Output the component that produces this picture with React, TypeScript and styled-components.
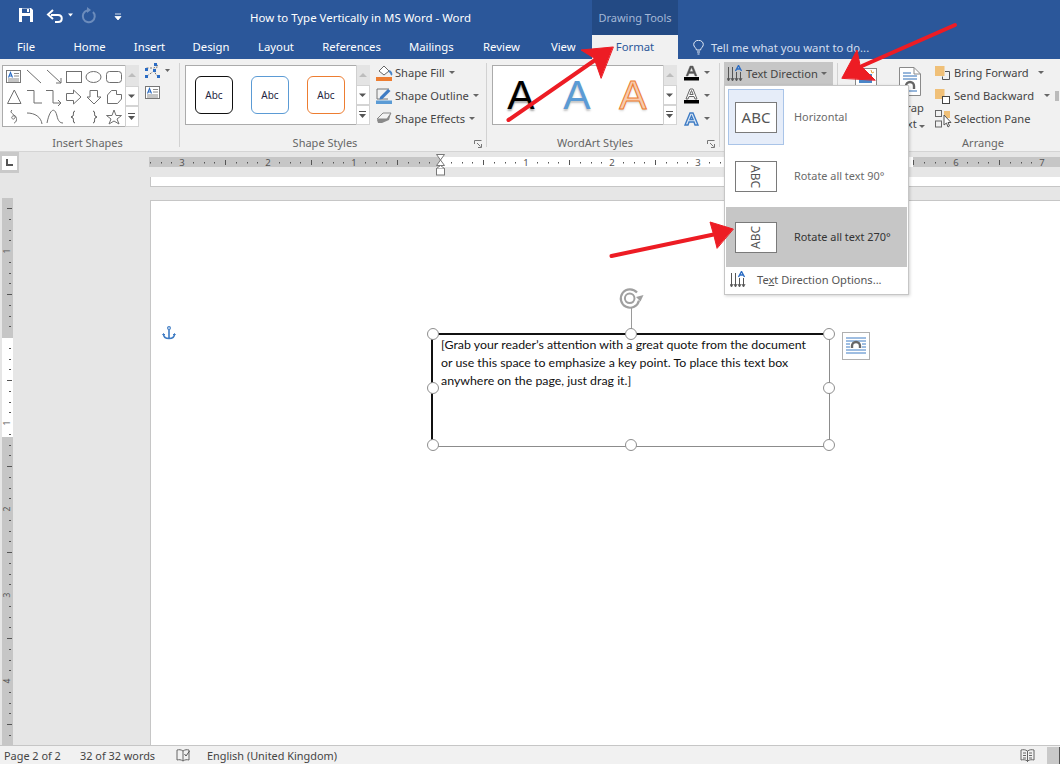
import React from "react";
import styled, { createGlobalStyle } from "styled-components";

const Global = createGlobalStyle`
  html, body { margin: 0; padding: 0; background: #e6e6e6; }
  * { box-sizing: border-box; }
`;

const Frame = styled.div`
  position: relative;
  width: 1060px;
  height: 764px;
  overflow: hidden;
  display: flex;
  flex-direction: column;
  font-family: "Noto Sans", "Open Sans", sans-serif;
  font-size: 11.5px;
  color: #444;
  background: #e6e6e6;
`;

/* ---------- title bar ---------- */
const TitleBar = styled.div`
  height: 35px;
  display: flex;
  background: #2b579a;
  color: #fff;
  flex: none;
`;
const Qat = styled.svg`
  width: 250px;
  height: 35px;
  flex: none;
`;
const DocTitle = styled.div`
  width: 342px;
  line-height: 36px;
  font-size: 11.45px;
  white-space: nowrap;
`;
const ContextLabel = styled.div`
  width: 86px;
  background: #234a84;
  color: #a4b8d6;
  text-align: center;
  line-height: 36px;
  font-size: 11px;
`;

/* ---------- tabs ---------- */
const TabBar = styled.div`
  height: 24px;
  display: flex;
  background: #2b579a;
  flex: none;
`;
const Tab = styled.div<{ $w: number; $active?: boolean }>`
  width: ${(p) => p.$w}px;
  text-align: center;
  line-height: 23px;
  font-size: 11.3px;
  white-space: nowrap;
  color: ${(p) => (p.$active ? "#2b579a" : "#fff")};
  background: ${(p) => (p.$active ? "#f1f1f1" : "transparent")};
`;
const TellMe = styled.div`
  display: flex;
  align-items: center;
  gap: 7px;
  margin-left: 15px;
  color: #d3deee;
  font-size: 11.3px;
  line-height: 23px;
  white-space: nowrap;
`;

/* ---------- ribbon ---------- */
const Ribbon = styled.div`
  height: 93px;
  display: flex;
  background: #f1f1f1;
  border-bottom: 1px solid #d4d4d4;
  flex: none;
`;
const Group = styled.div<{ $w: number; $noRule?: boolean }>`
  position: relative;
  width: ${(p) => p.$w}px;
  flex: none;
  display: flex;
  flex-direction: column;
  padding-top: 3px;
  &::after {
    content: "";
    position: absolute;
    right: 0;
    top: 4px;
    bottom: 4px;
    width: 1px;
    background: ${(p) => (p.$noRule ? "transparent" : "#d2d2d2")};
  }
`;
const GroupBody = styled.div<{ $left: number }>`
  flex: 1;
  display: flex;
  gap: 6px;
  padding-left: ${(p) => p.$left}px;
`;
const GroupLabel = styled.div<{ $shift?: number; $pull?: number }>`
  height: 17px;
  text-align: center;
  line-height: 17px;
  color: #666;
  font-size: 11px;
  padding-left: ${(p) => p.$shift ?? 0}px;
  padding-right: ${(p) => p.$pull ?? 0}px;
`;
const Launcher = styled.svg`
  position: absolute;
  right: 5px;
  bottom: 3px;
  width: 8px;
  height: 8px;
`;
const Gallery = styled.div<{ $w: number; $h: number }>`
  width: ${(p) => p.$w}px;
  height: ${(p) => p.$h}px;
  margin-top: 3px;
  display: flex;
  background: #fff;
  border: 1px solid #ababab;
  flex: none;
`;
const GalleryItems = styled.div`
  flex: 1;
  display: flex;
  align-items: center;
  justify-content: space-around;
  position: relative;
  min-width: 0;
`;
const ScrollCol = styled.div`
  width: 14px;
  flex: none;
  display: flex;
  flex-direction: column;
  border-left: 1px solid #d0d0d0;
  margin: -1px -1px -1px 0;
`;
const ScrollBtn = styled.div<{ $off?: boolean }>`
  flex: 1;
  display: flex;
  align-items: center;
  justify-content: center;
  background: ${(p) => (p.$off ? "#e4e4e4" : "#fff")};
  border: 1px solid ${(p) => (p.$off ? "#e4e4e4" : "#d4d4d4")};
  border-left: 0;
  color: ${(p) => (p.$off ? "#bdbdbd" : "#555")};
`;
const StyleCards = styled.div`
  display: flex;
  gap: 18px;
  padding-left: 9px;
  flex: 1;
  align-items: center;
`;
const StyleCard = styled.div<{ $c: string }>`
  width: 38px;
  height: 38px;
  border: 1.3px solid ${(p) => p.$c};
  border-radius: 6px;
  display: flex;
  align-items: center;
  justify-content: center;
  font-size: 10px;
  color: #1f1f3f;
`;
const ArtRow = styled.div`
  flex: 1;
  display: flex;
  padding-left: 0;
  align-items: center;
`;
const ArtLetter = styled.div<{ $fill: string; $stroke?: string; $blur: string }>`
  width: 56px;
  text-align: center;
  font-family: "Liberation Sans", Arial, sans-serif;
  font-size: 41px;
  line-height: 46px;
  color: ${(p) => p.$fill};
  -webkit-text-stroke: ${(p) => (p.$stroke ? `1px ${p.$stroke}` : "0")};
  text-shadow: 0 2px 2px ${(p) => p.$blur};
`;
const ButtonStack = styled.div<{ $gap?: number }>`
  display: flex;
  flex-direction: column;
  gap: ${(p) => p.$gap ?? 0}px;
  margin-top: ${(p) => (p.$gap ? 1 : -1)}px;
`;
const SmallBtn = styled.div`
  height: 23px;
  display: flex;
  align-items: center;
  gap: 2px;
  white-space: nowrap;
  font-size: 11.15px;
`;
const Caret = styled.span`
  width: 0;
  height: 0;
  margin-left: 2px;
  border-left: 3px solid transparent;
  border-right: 3px solid transparent;
  border-top: 3px solid #666;
  display: inline-block;
`;
const TextDirBtn = styled.div`
  width: 109px;
  height: 23px;
  margin-left: 4px;
  display: flex;
  align-items: center;
  gap: 1px;
  padding-left: 3px;
  background: #c6c6c6;
  white-space: nowrap;
  font-size: 11.15px;
`;
const PositionIcon = styled.svg`
  width: 24px;
  height: 36px;
  margin: 5px 0 0 16px;
  flex: none;
`;
const WrapBtn = styled.div`
  width: 42px;
  flex: none;
  margin-left: 5px;
  display: flex;
  flex-direction: column;
  align-items: center;
  padding-top: 5px;
  font-size: 11.15px;
  line-height: 16px;
  white-space: nowrap;
  svg { margin-bottom: 4px; flex: none; }
`;
const ArrangeStack = styled.div`
  display: flex;
  flex-direction: column;
  margin: -1px 0 0 -2px;
  width: 124px;
  flex: none;
`;
const ArrangeRow = styled.div`
  height: 23px;
  display: flex;
  align-items: center;
  gap: 1px;
  white-space: nowrap;
  font-size: 11.15px;
`;
const Spacer = styled.span<{ $w: number }>`
  width: ${(p) => p.$w}px;
  flex: none;
`;
const TinyBox = styled.span`
  width: 4px;
  height: 10px;
  flex: none;
  margin-left: auto;
  background: #bbb;
`;

/* ---------- ruler row + document ---------- */
const RulerRow = styled.div`
  height: 25px;
  display: flex;
  flex: none;
`;
const CornerBtn = styled.div`
  width: 149px;
  flex: none;
`;
const CornerMark = styled.div`
  width: 19px;
  height: 21px;
  background: #c9c9c9;
  display: flex;
  align-items: center;
  justify-content: center;
`;
const CornerFace = styled.div`
  width: 15px;
  height: 14px;
  background: #fff;
  display: flex;
  align-items: center;
  justify-content: center;
`;
const Workspace = styled.div`
  flex: 1;
  display: flex;
  min-height: 0;
`;
const Rail = styled.div`
  width: 150px;
  flex: none;
  padding: 21px 0 0 2px;
`;
const DocColumn = styled.div`
  flex: 1;
  display: flex;
  flex-direction: column;
  gap: 13px;
`;
const PageTail = styled.div`
  height: 10px;
  flex: none;
  background: #fff;
  border-left: 1px solid #c6c6c6;
  border-bottom: 1px solid #c6c6c6;
`;
const Page = styled.div`
  position: relative;
  flex: 1;
  background: #fff;
  border-left: 1px solid #c6c6c6;
  border-top: 1px solid #c6c6c6;
  padding: 132px 0 0 280px;
`;
const Anchor = styled.svg`
  position: absolute;
  left: 11px;
  top: 125px;
  width: 14px;
  height: 14px;
`;
const TextBox = styled.div`
  position: relative;
  width: 399px;
  height: 114px;
  border-top: 2px solid #111;
  border-left: 2px solid #111;
  border-right: 1px solid #8c8c8c;
  border-bottom: 1px solid #8c8c8c;
  padding: 1px 0 0 8px;
  font-family: Lato, "Noto Sans", sans-serif;
  font-size: 12.37px;
  line-height: 18px;
  color: #111;
  white-space: nowrap;
`;
const Handle = styled.span<{ $x: number; $y: number }>`
  position: absolute;
  left: ${(p) => p.$x}%;
  top: ${(p) => p.$y}%;
  width: 12px;
  height: 12px;
  margin: -7px 0 0 -6px;
  border-radius: 50%;
  border: 1.5px solid #8e8e8e;
  background: #fff;
`;
const RotateStem = styled.span`
  position: absolute;
  left: 50%;
  top: -27px;
  width: 1px;
  height: 26px;
  background: #9a9a9a;
`;
const RotateIcon = styled.svg`
  position: absolute;
  left: 185px;
  top: -47px;
  width: 28px;
  height: 24px;
`;
const LayoutOptions = styled.div`
  position: absolute;
  left: 409px;
  top: -3px;
  width: 28px;
  height: 28px;
  border: 1px solid #b0b0b0;
  background: #fff;
  display: flex;
  align-items: center;
  justify-content: center;
`;

/* ---------- dropdown ---------- */
const Menu = styled.div`
  position: absolute;
  left: 724px;
  top: 85px;
  width: 185px;
  height: 210px;
  background: #fff;
  border: 1px solid #c6c6c6;
  box-shadow: 1px 1px 3px rgba(0, 0, 0, 0.18);
  display: flex;
  flex-direction: column;
  padding: 3px 1px 0;
`;
const MenuItem = styled.div<{ $h: number; $hot?: boolean }>`
  height: ${(p) => p.$h}px;
  flex: none;
  display: flex;
  align-items: center;
  background: ${(p) => (p.$hot ? "#c6c6c6" : "transparent")};
  color: ${(p) => (p.$hot ? "#333" : "#6a6a6a")};
  font-size: 10.9px;
  white-space: nowrap;
`;
const MenuLabel = styled.span`
  margin-top: -2px;
`;
const IconCell = styled.div<{ $on?: boolean }>`
  width: 56px;
  height: 56px;
  margin: 0 10px 0 2px;
  flex: none;
  display: flex;
  align-items: center;
  justify-content: center;
  background: ${(p) => (p.$on ? "#e6edf9" : "transparent")};
  border: 1px solid ${(p) => (p.$on ? "#a9c4e8" : "transparent")};
`;
const AbcBox = styled.div`
  width: 42px;
  height: 31px;
  background: #fff;
  border: 1px solid #7a7a7a;
  display: flex;
  align-items: center;
  justify-content: center;
  overflow: hidden;
`;
const AbcText = styled.span<{ $rot?: number; $size: number }>`
  display: inline-block;
  font-size: ${(p) => p.$size}px;
  color: #555;
  letter-spacing: 0;
  transform: rotate(${(p) => p.$rot ?? 0}deg);
`;
const MenuFoot = styled.div`
  flex: 1;
  display: flex;
  align-items: center;
  gap: 9px;
  padding: 0 0 2px 4px;
  font-size: 11.1px;
  color: #555;
  white-space: nowrap;
`;

/* ---------- status bar ---------- */
const StatusBar = styled.div`
  height: 19px;
  flex: none;
  display: flex;
  align-items: center;
  background: #f1f1f1;
  border-top: 1px solid #c6c6c6;
  font-size: 10.9px;
  color: #444;
  white-space: nowrap;
  padding: 1px 0 0 4px;
`;
const StatusText = styled.span<{ $w: number }>`
  width: ${(p) => p.$w}px;
  flex: none;
`;
const StatusIcon = styled.svg`
  width: 15px;
  height: 15px;
  flex: none;
`;
const StatusRight = styled.div`
  margin-left: auto;
  display: flex;
  align-items: center;
  align-self: stretch;
`;
const ActiveView = styled.div`
  width: 13px;
  align-self: stretch;
  margin-left: 12px;
  background: #c9c9c9;
  border-right: 1px solid #555;
`;
const ArrowLayer = styled.svg`
  position: absolute;
  inset: 0;
  width: 1060px;
  height: 764px;
  pointer-events: none;
`;

/* ---------- drawings ---------- */
const TextBoxGlyph = ({ x = 0, y = 0 }: { x?: number; y?: number }) => (
  <g transform={`translate(${x} ${y})`}>
    <rect x="0.5" y="0.5" width="14" height="12" fill="#fff" stroke="#777" />
    <path d="M2.5 7.5 L4.5 2.5 L6.5 7.5 M3.3 6 H5.7" fill="none" stroke="#2b6cc4" strokeWidth="1.1" />
    <path d="M8 3.5 H13 M8 6 H13 M2 9 H13 M2 11 H13" stroke="#8a8a8a" />
  </g>
);

const ShapesGrid = () => (
  <svg width="122" height="60" viewBox="0 0 122 60" fill="none" stroke="#6f6f6f" strokeWidth="1">
    <TextBoxGlyph x={3} y={4} />
    <path d="M24 4 L38 17" />
    <path d="M44 4 L58 17 M58 12 V17 H53" />
    <rect x="63.5" y="5.5" width="15" height="11" />
    <ellipse cx="90.5" cy="11" rx="7.5" ry="5.5" />
    <rect x="103.5" y="5.5" width="15" height="11" rx="3" />
    <path d="M11.3 24 L18 37.5 H4.5 Z" />
    <path d="M24 24.5 H31 V37 H39" />
    <path d="M43 24.5 H50 V37 H58 M55 34 L58 37 L55 40" />
    <path d="M63.5 27.5 H70.5 V24 L78 31 L70.5 38 V34.5 H63.5 Z" />
    <path d="M87 24.5 H94.5 V31 H98 L91 38 L84 31 H87 Z" />
    <path d="M108.5 24.5 H113.5 V28.5 H118.5 V33 L114.5 37.5 H104.5 V29 Z" />
    <path d="M9 44 C5 47 14 49 12 52 C10 55 7 51 10 50 C14 48 15 56 11 57" />
    <path d="M24 47 C32 47 38 51 39 58" />
    <path d="M44 57 C47 42 52 41 54 50 C55 55 57 57 60 57" />
    <path d="M72 45 C69.5 45 71 49 70 50 L68 51 L70 52 C71 53 69.5 57 72 57" stroke="#555" />
    <path d="M90 45 C92.5 45 91 49 92 50 L94 51 L92 52 C91 53 92.5 57 90 57" stroke="#555" />
    <path d="M111 44 L113 49.5 H118.5 L114 53 L116 58 L111 55 L106 58 L108 53 L103.5 49.5 H109 Z" />
  </svg>
);

const ChevUp = () => <svg width="8" height="5"><path d="M4 0 L8 4 H0 Z" fill="currentColor" /></svg>;
const ChevDown = () => <svg width="8" height="5"><path d="M0 0.5 H7 L3.5 4 Z" fill="currentColor" /></svg>;
const ChevMore = () => (
  <svg width="8" height="8">
    <path d="M0 0.5 H7" stroke="currentColor" />
    <path d="M0 3 H7 L3.5 7 Z" fill="currentColor" />
  </svg>
);
const Scroller = () => (
  <ScrollCol>
    <ScrollBtn $off><ChevUp /></ScrollBtn>
    <ScrollBtn><ChevDown /></ScrollBtn>
    <ScrollBtn><ChevMore /></ScrollBtn>
  </ScrollCol>
);

const LaunchIcon = () => (
  <Launcher viewBox="0 0 8 8" fill="none" stroke="#777">
    <path d="M0.5 4 V0.5 H7.5 M3 3 L6.5 6.5 M7.5 4 V7.5 H4" />
  </Launcher>
);

const TextDirIcon = () => (
  <svg width="18" height="18" viewBox="0 0 18 18" fill="none" stroke="#555">
    <path d="M1.5 2 V15 M5.5 2 V15 M9.5 7 V15 M13.5 7 V15" />
    <path d="M0 13 L1.5 16 L3 13 M4 13 L5.5 16 L7 13 M8 13 L9.5 16 L11 13 M12 13 L13.5 16 L15 13" />
    <path d="M8.5 6 L11.5 0.5 L14.5 6 M9.7 4 H13.3" stroke="#2b6cc4" strokeWidth="1.4" />
  </svg>
);

const QatIcons = () => (
  <Qat viewBox="0 0 250 35">
    <path d="M19 8 H31 L33 10 V22 H19 Z" fill="#fff" />
    <rect x="22" y="8.5" width="8" height="4.5" fill="#2b579a" />
    <rect x="27" y="9" width="2" height="3" fill="#fff" />
    <rect x="22" y="16" width="8" height="6" fill="#2b579a" />
    <path d="M51 15 H58 C63 15 63 22 58 22 H55" fill="none" stroke="#fff" strokeWidth="2" />
    <path d="M53 10 L48 14.5 L53 19" fill="none" stroke="#fff" strokeWidth="2" />
    <path d="M68 13.5 H73 L70.5 16.5 Z" fill="#fff" />
    <path d="M93 12 A6 6 0 1 1 87 10.5" fill="none" stroke="#6c8cbc" strokeWidth="2" />
    <path d="M87 7 V13 L91 10 Z" fill="#6c8cbc" />
    <path d="M115 14 H121 M115 16.5 H121 L118 20 Z" fill="#fff" stroke="#fff" strokeWidth="0.8" />
  </Qat>
);

const FillIcon = () => (
  <svg width="17" height="17" viewBox="0 0 17 17">
    <path d="M3 7 L8 2 L13 7 L8 11 Z" fill="#fff" stroke="#666" />
    <path d="M13 7 C15 8 16 10 15 11" stroke="#4a86c8" strokeWidth="2" fill="none" />
    <rect x="0" y="13" width="16" height="4" fill="#ed7d31" />
  </svg>
);
const OutlineIcon = () => (
  <svg width="17" height="17" viewBox="0 0 17 17">
    <path d="M1 2 H13 M1 2 V12 H12" fill="none" stroke="#777" />
    <path d="M4 10 L12 2 L14.5 4 L6.5 12 L3.5 12.5 Z" fill="#3f7cc4" />
    <rect x="0" y="13.5" width="16" height="3.5" fill="#5b9bd5" />
  </svg>
);
const EffectsIcon = () => (
  <svg width="17" height="15" viewBox="0 0 17 15">
    <path d="M1 9 L7 2 H15 L13 9 L6 12 H2 Z" fill="#8a8a8a" />
    <path d="M1 8 L7 2 H15 L11 8 Z" fill="#f4f4f4" stroke="#888" />
  </svg>
);
const TextFillIcon = ({ kind }: { kind: "fill" | "outline" | "effect" }) => (
  <svg width="17" height="17" viewBox="0 0 17 17">
    {kind === "effect" ? (
      <path d="M2 15 L7 3 H10 L15 15 H12 L11 12 H6 L5 15 Z M7 9.5 H10 L8.5 6 Z" fill="#dbe7f5" stroke="#3f7cc4" strokeWidth="1.4" />
    ) : (
      <>
        <path d="M3 12 L7 2 H10 L14 12 H12 L11 9.5 H6 L5 12 Z M6.8 7.5 H10.2 L8.5 3.5 Z" fill={kind === "fill" ? "#555" : "#fff"} stroke="#666" strokeWidth={kind === "fill" ? 0.4 : 1} />
        <rect x="1" y="13" width="15" height="3.5" fill="#000" />
      </>
    )}
  </svg>
);

const WrapIcon = () => (
  <svg width="22" height="29" viewBox="0 0 22 29" fill="none">
    <path d="M0.5 0.5 H15 L21.5 7 V28.5 H0.5 Z" fill="#fff" stroke="#8a8a8a" />
    <path d="M15 0.5 V7 H21.5" stroke="#8a8a8a" />
    <path d="M4 6 H12 M4 9 H18 M4 12 H18 M4 24 H18" stroke="#2f6fb8" />
    <path d="M7 22 V19 A4 4 0 0 1 15 19 V22" stroke="#666" strokeWidth="2.4" />
  </svg>
);

const ForwardIcon = ({ large }: { large?: boolean }) => (
  <svg width="18" height="16" viewBox="0 0 18 16" fill="none">
    <rect x="0" y="1" width="9.5" height="10" fill="#f0c078" />
    {large ? (
      <rect x="7.5" y="8.5" width="7" height="7" fill="#fff" stroke="#444" />
    ) : (
      <path d="M10 6.5 H14.5 V14.5 H7.5 V11.5" stroke="#555" />
    )}
  </svg>
);
const PaneIcon = () => (
  <svg width="18" height="18" viewBox="0 0 18 18" fill="none">
    <rect x="0.5" y="0.5" width="6" height="6" stroke="#666" />
    <rect x="0.5" y="11" width="6" height="6" stroke="#666" />
    <rect x="9" y="1" width="6" height="7" fill="#f0c078" />
    <path d="M9 5 V15 L11.5 13 L13 17 L14.5 16 L13 12.5 H16 Z" fill="#fff" stroke="#555" />
  </svg>
);

const rulerTicks = (from: number, to: number) => {
  const out: number[] = [];
  for (let i = from; i <= to; i++) out.push(i);
  return out;
};
const STEP = 86 / 8;

const HRuler = () => {
  const zero = 291;
  return (
    <svg width="911" height="25" viewBox="0 0 911 25">
      <rect x="0" y="5" width="911" height="10" fill="#c6c6c6" />
      <rect x={zero} y="5" width="473" height="10" fill="#fff" />
      {rulerTicks(-27, 56).map((i) => {
        const x = zero + i * STEP;
        if (i === 0) return null;
        if (i % 8 === 0)
          return (
            <text key={i} x={x} y="13.5" textAnchor="middle" fontSize="9.5" fontFamily="Noto Sans, sans-serif" fill="#555">
              {Math.abs(i / 8)}
            </text>
          );
        if (i % 4 === 0) return <rect key={i} x={Math.round(x)} y="8" width="1" height="5" fill="#555" />;
        return <rect key={i} x={Math.round(x)} y="10" width="1" height="1.5" fill="#555" />;
      })}
      <path d="M287.5 2.5 H295.5 L291.5 8 L295.5 13.5 H287.5 L291.5 8 Z" fill="#fff" stroke="#777" />
      <rect x="287.5" y="16.5" width="8" height="6.5" fill="#fff" stroke="#777" />
      <path d="M287.5 16.5 L291.5 13.5 L295.5 16.5" fill="#fff" stroke="#777" />
    </svg>
  );
};

const VRuler = () => {
  const zero = 139;
  return (
    <svg width="11" height="548" viewBox="0 0 11 548" style={{ display: "block" }}>
      <rect x="0" y="0" width="11" height="548" fill="#c6c6c6" />
      <rect x="0" y="140" width="11" height="99" fill="#fff" />
      {rulerTicks(-12, 38).map((i) => {
        const y = zero + i * STEP;
        if (i === 0) return null;
        if (i % 8 === 0)
          return (
            <text
              key={i}
              x="6"
              y={y}
              transform={`rotate(-90 6 ${y})`}
              textAnchor="middle"
              dominantBaseline="middle"
              fontSize="8.5"
              fontFamily="Noto Sans, sans-serif"
              fill="#555"
            >
              {Math.abs(i / 8)}
            </text>
          );
        if (i % 4 === 0) return <rect key={i} x="5" y={Math.round(y)} width="5" height="1" fill="#555" />;
        return <rect key={i} x="7" y={Math.round(y)} width="2" height="1" fill="#555" />;
      })}
    </svg>
  );
};

const TABS: [string, number][] = [
  ["File", 52],
  ["", 7],
  ["Home", 61],
  ["Insert", 59],
  ["Design", 64],
  ["Layout", 66],
  ["References", 85],
  ["Mailings", 74.5],
  ["Review", 66],
  ["View", 57.5],
];

export default function App() {
  return (
    <Frame>
      <Global />
      <TitleBar>
        <QatIcons />
        <DocTitle>How to Type Vertically in MS Word - Word</DocTitle>
        <ContextLabel>Drawing Tools</ContextLabel>
      </TitleBar>
      <TabBar>
        {TABS.map(([label, w], i) => (
          <Tab key={i} $w={w}>{label}</Tab>
        ))}
        <Tab $w={86} $active>Format</Tab>
        <TellMe>
          <svg width="11" height="15" viewBox="0 0 11 15" fill="none" stroke="#e4ebf5">
            <path d="M3.5 10 C3 7.5 0.7 7 0.7 4.5 A4.8 4.2 0 0 1 10.3 4.5 C10.3 7 8 7.5 7.5 10 Z" />
            <path d="M4 12 H7 M4.5 14 H6.5" />
          </svg>
          Tell me what you want to do...
        </TellMe>
      </TabBar>
      <Ribbon>
        <Group $w={180}>
          <GroupBody $left={2}>
            <Gallery $w={137} $h={62}>
              <GalleryItems><ShapesGrid /></GalleryItems>
              <Scroller />
            </Gallery>
            <ButtonStack $gap={7}>
              <svg width="27" height="16" viewBox="0 0 27 16" fill="none">
                <path d="M1.5 5 H9 L13 2 M2 13 L9 8 L12 13 M9 8 L13 3" stroke="#777" strokeDasharray="2 1.5" />
                <rect x="9" y="0" width="3" height="3" fill="#2b6cc4" />
                <rect x="0" y="5" width="3" height="3" fill="#2b6cc4" />
                <rect x="0" y="12" width="3" height="3" fill="#2b6cc4" />
                <rect x="12" y="12" width="3" height="3" fill="#2b6cc4" />
                <rect x="8" y="6" width="3" height="3" fill="#2b6cc4" />
                <path d="M20 6 H25 L22.5 9 Z" fill="#666" />
              </svg>
              <svg width="15" height="13" viewBox="0 0 15 13"><TextBoxGlyph /></svg>
            </ButtonStack>
          </GroupBody>
          <GroupLabel $pull={5}>Insert Shapes</GroupLabel>
        </Group>

        <Group $w={307}>
          <GroupBody $left={5}>
            <Gallery $w={185} $h={60}>
              <StyleCards>
                <StyleCard $c="#111">Abc</StyleCard>
                <StyleCard $c="#5b9bd5">Abc</StyleCard>
                <StyleCard $c="#ed7d31">Abc</StyleCard>
              </StyleCards>
              <Scroller />
            </Gallery>
            <ButtonStack>
              <SmallBtn><FillIcon />Shape Fill<Caret /></SmallBtn>
              <SmallBtn><OutlineIcon />Shape Outline<Caret /></SmallBtn>
              <SmallBtn><EffectsIcon />Shape Effects<Caret /></SmallBtn>
            </ButtonStack>
          </GroupBody>
          <GroupLabel $pull={17}>Shape Styles</GroupLabel>
          <LaunchIcon />
        </Group>

        <Group $w={233}>
          <GroupBody $left={5}>
            <Gallery $w={185} $h={60}>
              <ArtRow>
                <ArtLetter $fill="#000" $blur="rgba(0,0,0,0.35)">A</ArtLetter>
                <ArtLetter $fill="#5b9bd5" $blur="rgba(60,60,60,0.3)">A</ArtLetter>
                <ArtLetter $fill="#f8cbad" $stroke="#ed7d31" $blur="rgba(60,60,60,0.2)">A</ArtLetter>
              </ArtRow>
              <Scroller />
            </Gallery>
            <ButtonStack>
              <SmallBtn><TextFillIcon kind="fill" /><Caret /></SmallBtn>
              <SmallBtn><TextFillIcon kind="outline" /><Caret /></SmallBtn>
              <SmallBtn><TextFillIcon kind="effect" /><Caret /></SmallBtn>
            </ButtonStack>
          </GroupBody>
          <GroupLabel $pull={17}>WordArt Styles</GroupLabel>
          <LaunchIcon />
        </Group>

        <Group $w={118}>
          <GroupBody $left={0}>
            <TextDirBtn><TextDirIcon />Text Direction<Caret /></TextDirBtn>
          </GroupBody>
        </Group>

        <Group $w={222} $noRule>
          <GroupBody $left={0}>
            <PositionIcon viewBox="0 0 24 36" fill="none">
              <rect x="1.5" y="1.5" width="21" height="20" fill="#fff" stroke="#8a8a8a" />
              <rect x="5" y="7" width="13" height="9" fill="#4a86c8" />
              <path d="M17 3 L18 6 L20 5" stroke="#e8a33d" />
            </PositionIcon>
            <WrapBtn>
              <WrapIcon />
              <span>Wrap</span>
              <span>Text<Caret /></span>
            </WrapBtn>
            <ArrangeStack>
              <ArrangeRow><ForwardIcon />Bring Forward<Spacer $w={5} /><Caret /></ArrangeRow>
              <ArrangeRow><ForwardIcon large />Send Backward<Spacer $w={6} /><Caret /><TinyBox /></ArrangeRow>
              <ArrangeRow><PaneIcon />Selection Pane</ArrangeRow>
            </ArrangeStack>
          </GroupBody>
          <GroupLabel $shift={68}>Arrange</GroupLabel>
        </Group>
      </Ribbon>

      <RulerRow>
        <CornerBtn>
          <CornerMark>
            <CornerFace>
              <svg width="7" height="7"><path d="M1 0 V6 H7" fill="none" stroke="#555" strokeWidth="2" /></svg>
            </CornerFace>
          </CornerMark>
        </CornerBtn>
        <HRuler />
      </RulerRow>

      <Workspace>
        <Rail><VRuler /></Rail>
        <DocColumn>
          <PageTail />
          <Page>
            <Anchor viewBox="0 0 14 14" fill="none" stroke="#3f7cc4" strokeWidth="1.6">
              <circle cx="7" cy="2" r="1.4" strokeWidth="1.1" />
              <path d="M7 3.5 V12.5 M1.5 8 C1.5 11 4 12.5 7 12.5 C10 12.5 12.5 11 12.5 8" />
              <path d="M0.5 9 L1.5 7.5 L3 9 M11 9 L12.5 7.5 L13.5 9" strokeWidth="1" />
            </Anchor>
            <TextBox>
              [Grab your reader’s attention with a great quote from the document<br />
              or use this space to emphasize a key point. To place this text box<br />
              anywhere on the page, just drag it.]
              <RotateStem />
              <RotateIcon viewBox="0 0 28 24" fill="none" stroke="#a0a0a0" strokeWidth="2.2">
                <path d="M19 4.5 A9.2 9.2 0 1 0 21 12.5" />
                <circle cx="11.7" cy="10.3" r="4.8" strokeWidth="2" />
                <path d="M18 9 L25.5 7 L22.5 13.5 Z" fill="#a0a0a0" stroke="none" />
              </RotateIcon>
              <LayoutOptions>
                <svg width="20" height="20" viewBox="0 0 20 20" fill="none">
                  <path d="M0 2 H20 M0 5 H20 M0 14 H20 M0 17 H20 M0 8 H4 M16 8 H20 M0 11 H4 M16 11 H20" stroke="#3f7cc4" />
                  <path d="M6 12 V10 A4 4 0 0 1 14 10 V12" stroke="#666" strokeWidth="2.4" />
                </svg>
              </LayoutOptions>
              <Handle $x={0} $y={0} />
              <Handle $x={50} $y={0} />
              <Handle $x={100} $y={0} />
              <Handle $x={0} $y={49} />
              <Handle $x={100} $y={49} />
              <Handle $x={0} $y={100} />
              <Handle $x={50} $y={100} />
              <Handle $x={100} $y={100} />
            </TextBox>
          </Page>
        </DocColumn>
      </Workspace>

      <StatusBar>
        <StatusText $w={76}>Page 2 of 2</StatusText>
        <StatusText $w={96}>32 of 32 words</StatusText>
        <StatusIcon viewBox="0 0 15 15" fill="none" stroke="#666">
          <path d="M7 3 C5 1.5 3 1.5 1 2 V12 C3 11.5 5 11.5 7 13 C9 11.5 11 11.5 13 12 V2 C11 1.5 9 1.5 7 3 V13" />
          <path d="M8.5 6 L10 8 L13.5 3" stroke="#555" />
        </StatusIcon>
        <Spacer $w={16} />
        <span>English (United Kingdom)</span>
        <StatusRight>
          <StatusIcon viewBox="0 0 15 15" fill="none" stroke="#666">
            <path d="M7.5 3 C5.5 1.5 3 1.5 1 2 V12 C3 11.5 5.5 11.5 7.5 13 C9.5 11.5 12 11.5 14 12 V2 C12 1.5 9.5 1.5 7.5 3 V14" />
            <path d="M3 5 H6 M3 7.5 H6 M3 10 H6 M9 5 H12 M9 7.5 H12 M9 10 H12" />
          </StatusIcon>
          <ActiveView />
        </StatusRight>
      </StatusBar>

      <Menu>
        <MenuItem $h={56}>
          <IconCell $on>
            <AbcBox><AbcText $size={15}>ABC</AbcText></AbcBox>
          </IconCell>
          <MenuLabel>Horizontal</MenuLabel>
        </MenuItem>
        <MenuItem $h={62}>
          <IconCell>
            <AbcBox><AbcText $size={12} $rot={90}>ABC</AbcText></AbcBox>
          </IconCell>
          <MenuLabel>Rotate all text 90°</MenuLabel>
        </MenuItem>
        <MenuItem $h={60} $hot>
          <IconCell>
            <AbcBox><AbcText $size={12} $rot={-90}>ABC</AbcText></AbcBox>
          </IconCell>
          <MenuLabel>Rotate all text 270°</MenuLabel>
        </MenuItem>
        <MenuFoot>
          <TextDirIcon />
          <span>Te<u>x</u>t Direction Options...</span>
        </MenuFoot>
      </Menu>

      <ArrowLayer viewBox="0 0 1060 764">
        <g fill="#ed1c24" stroke="#ed1c24" strokeLinecap="round">
          <path d="M508.5 120 L598 58" strokeWidth="4" />
          <path d="M613 47 L581 50 L594 58 L601 78 Z" strokeWidth="1" />
          <path d="M955 25 L862 66" strokeWidth="4" />
          <path d="M842 78 L857 50 L860 65 L875 80 Z" strokeWidth="1" />
          <path d="M611.5 256 L716 234" strokeWidth="4" />
          <path d="M733 229 L710 222 L714 236 L717 248 Z" strokeWidth="1" />
        </g>
      </ArrowLayer>
    </Frame>
  );
}
